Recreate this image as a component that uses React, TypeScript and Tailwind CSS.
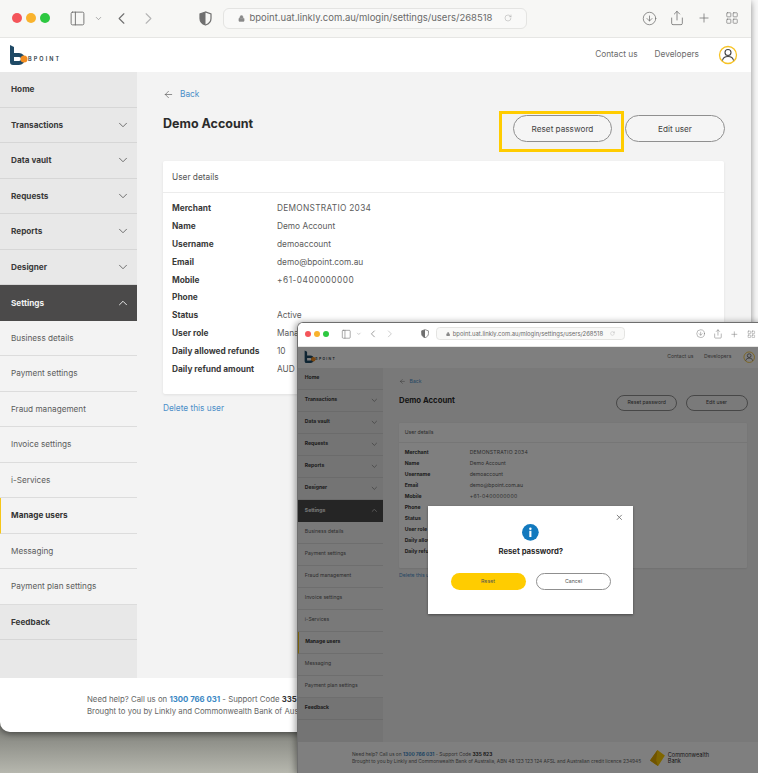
import { ArrowLeft, ChevronDown, ChevronLeft, ChevronRight, ChevronUp, CircleArrowDown, LayoutGrid, Lock, PanelLeft, Plus, RotateCw, Share, X } from "lucide-react";

const font = "[font-family:Inter,'Liberation_Sans',sans-serif]";

const mainNav = [
  { label: "Home" },
  { label: "Transactions", arrow: true },
  { label: "Data vault", arrow: true },
  { label: "Requests", arrow: true },
  { label: "Reports", arrow: true },
  { label: "Designer", arrow: true },
];
const subNav = ["Business details", "Payment settings", "Fraud management", "Invoice settings", "i-Services", "Manage users", "Messaging", "Payment plan settings"];
const details: [string, string][] = [
  ["Merchant", "DEMONSTRATIO 2034"],
  ["Name", "Demo Account"],
  ["Username", "demoaccount"],
  ["Email", "demo@bpoint.com.au"],
  ["Mobile", "+61-0400000000"],
  ["Phone", ""],
  ["Status", "Active"],
  ["User role", "Manager"],
  ["Daily allowed refunds", "10"],
  ["Daily refund amount", "AUD 1,000.00"],
];

function Toolbar({ white }: { white: boolean }) {
  return (
    <div className={`relative z-20 flex h-[38px] shrink-0 items-center border-b border-[#e6e6e4] pb-[1px] pl-[12px] text-[#6f6f6f] ${white ? "bg-white" : "bg-[#f7f7f5]"}`}>
      <div className="flex w-[48px] gap-[4.5px]">
        <span className="h-[9.5px] w-[9.5px] rounded-full bg-[#f4555a]" />
        <span className="h-[9.5px] w-[9.5px] rounded-full bg-[#f9b32d]" />
        <span className="h-[9.5px] w-[9.5px] rounded-full bg-[#2dc840]" />
      </div>
      <PanelLeft size={17} strokeWidth={1.3} className="ml-[9px]" />
      <ChevronDown size={9} strokeWidth={1.5} className="ml-[8px]" />
      <ChevronLeft size={19} strokeWidth={1.4} className="ml-[9px]" />
      <ChevronRight size={19} strokeWidth={1.4} className="ml-[8px] text-[#b5b5b5]" />
      <svg width="13" height="15" viewBox="0 0 13 15" className="ml-[41px]">
        <path d="M6.5 1 1 3v4.5C1 11 3.5 13 6.5 14c3-1 5.500-3 5.500-6.500V3z" fill="none" stroke="#6f6f6f" strokeWidth="1.200" />
        <path d="M6.500 1 1 3v4.500C1 11 3.500 13 6.500 14z" fill="#6f6f6f" />
      </svg>
      <div className={`ml-[11px] flex h-[21px] w-[304px] items-center justify-center gap-[4px] rounded-[6px] border border-[#e4e4e2] bg-[#f9f9f8] text-[9.500px] text-[#6a6a6a] ${font}`}>
        <Lock size={7} fill="#8a8a8a" strokeWidth={1.500} className="text-[#8a8a8a]" />
        <span>bpoint.uat.linkly.com.au/mlogin/settings/users/268518</span>
        <RotateCw size={8} strokeWidth={1.300} className="ml-[7px] text-[#9a9a9a]" />
      </div>
      <CircleArrowDown size={15} strokeWidth={1.200} className="ml-[115px]" />
      <Share size={16} strokeWidth={1.200} className="ml-[12px]" />
      <Plus size={14} strokeWidth={1.300} className="ml-[12px]" />
      <LayoutGrid size={14} strokeWidth={1.100} className="ml-[14px]" />
    </div>
  );
}

function Logo() {
  return (
    <div className="flex items-end">
      <svg width="20" height="22" viewBox="0 0 20 22">
        <path d="M1 1 L5 3 V9 H10 A6 6 0 1 1 10 21 H4 A3 3 0 0 1 1 18 Z M5 13 V17 H10 A2 2 0 1 0 10 13 Z" fill="#1f4a66" fillRule="evenodd" />
        <circle cx="15" cy="15" r="3.500" fill="#f28c1e" />
      </svg>
      <span className={`-ml-[1px] mb-[3.500px] text-[5.500px] font-semibold leading-none tracking-[0.38em] text-[#2b3a45] ${font}`}>BPOINT</span>
    </div>
  );
}

function Header() {
  return (
    <div className={`flex h-[34px] shrink-0 items-center bg-white pb-[1px] pl-[9px] pr-[13px] text-[8.300px] text-[#6b6b6b] ${font}`}>
      <Logo />
      <span className="ml-auto">Contact us</span>
      <span className="ml-[17px]">Developers</span>
      <svg width="20" height="20" viewBox="0 0 20 20" className="ml-[19px]">
        <circle cx="10" cy="10" r="8.500" fill="white" stroke="#f7c325" strokeWidth="1.300" />
        <circle cx="10" cy="7.500" r="3" fill="none" stroke="#444" strokeWidth="1.100" />
        <path d="M4.500 15.500c.5-3 3-4 5.500-4s5 1 5.500 4" fill="none" stroke="#444" strokeWidth="1.100" />
      </svg>
    </div>
  );
}

function Sidebar() {
  return (
    <div className={`flex w-[137px] shrink-0 flex-col bg-[#e8e8e8] text-[8.200px] ${font}`}>
      {mainNav.map((n) => (
        <div key={n.label} className="flex h-[35.500px] shrink-0 items-center justify-between border-b border-[#d6d6d6] pl-[11px] pr-[7px] font-bold text-[#3a3a3a]">
          <span className={n.label === "Home" ? "mb-[1px]" : ""}>{n.label}</span>
          {n.arrow && <ChevronDown size={14} strokeWidth={1.400} className="text-[#555]" />}
        </div>
      ))}
      <div className="flex h-[35.500px] shrink-0 items-center justify-between bg-[#4b4a4a] pl-[11px] pr-[7px] font-bold text-[#f2f2f2]">
        <span>Settings</span>
        <ChevronUp size={14} strokeWidth={1.600} />
      </div>
      {subNav.map((s) => {
        const active = s === "Manage users";
        return (
          <div
            key={s}
            className={`flex h-[35.500px] shrink-0 items-center border-b border-[#dcdcdc] bg-[#f3f3f3] ${active ? "border-l border-l-[#f5c518] pl-[10px] font-bold text-[#333]" : "pl-[11px] text-[#5c5c5c]"}`}
          >
            {s}
          </div>
        );
      })}
      <div className="flex h-[35.500px] shrink-0 items-center border-b border-[#d6d6d6] pl-[11px] font-bold text-[#3a3a3a]">Feedback</div>
    </div>
  );
}

function Main({ highlight }: { highlight: boolean }) {
  return (
    <div className={`min-w-0 flex-1 bg-[#f3f3f3] pl-[26px] pr-[26px] pt-[16px] ${font}`}>
      <div className="flex items-center gap-[6px] text-[8.300px] text-[#4b8ec8]">
        <ArrowLeft size={11} strokeWidth={1.400} className="text-[#555]" />
        <span>Back</span>
      </div>
      <div className="relative mt-[12px] flex h-[49px] items-start justify-between">
        <h1 className="mt-[3px] text-[12.500px] font-bold text-[#2b2b2b]">Demo Account</h1>
        <div className="mt-[3px] flex gap-[13px] text-[8.200px] text-[#444]">
          <div className="relative flex h-[27px] w-[99px] items-center justify-center rounded-full border border-[#8f8f8f] bg-[#f5f5f5]">
            Reset password
            {highlight && <div className="absolute -left-[15px] -right-[13px] -top-[5px] h-[41px] border-[3px] border-[#ffcc00]" />}
          </div>
          <div className="flex h-[27px] w-[100px] items-center justify-center rounded-full border border-[#8f8f8f] bg-[#f5f5f5]">Edit user</div>
        </div>
      </div>
      <div className="h-[233px] w-[561px] rounded-[2px] bg-white shadow-[0_1px_3px_rgba(0,0,0,0.08)]">
        <div className="flex h-[32px] items-center border-b border-[#ececec] pl-[9px] text-[8.300px] text-[#555]">User details</div>
        <div className="grid grid-cols-[105px_1fr] pl-[9px] pt-[7px] text-[8.300px] leading-[17.800px]">
          {details.map(([k, v]) => (
            <div key={k} className="contents">
              <span className="font-bold text-[#3a3a3a]">{k}</span>
              <span className={`text-[#5c5c5c] ${k === "Mobile" ? "tracking-[0.5px]" : k === "Merchant" ? "tracking-[0.3px]" : ""}`}>{v}</span>
            </div>
          ))}
        </div>
      </div>
      <div className="mt-[8px] text-[8.300px] text-[#4b8ec8]">Delete this user</div>
    </div>
  );
}

function Footer() {
  return (
    <div className={`flex h-[54px] shrink-0 items-center bg-white pl-[87px] text-[7.800px] leading-[12px] text-[#666] ${font}`}>
      <div className="whitespace-nowrap">
        <div>
          Need help? Call us on <span className="font-bold text-[#3a87c4]">1300 766 031</span> - Support Code <span className="font-bold text-[#333]">335 823</span>
        </div>
        <div>Brought to you by Linkly and Commonwealth Bank of Australia, ABN 48 123 123 124 AFSL and Australian credit licence 234945</div>
      </div>
      <svg width="24" height="26" viewBox="0 0 24 26" className="ml-[14px]">
        <path d="M12 0 24 9 13 26 0 17z" fill="#ffcc00" />
        <path d="M12 0 10 17 13 26 0 17z" fill="#e0a800" />
      </svg>
      <div className="ml-[5px] text-[9px] leading-[10px] text-[#333]">Commonwealth<br />Bank</div>
    </div>
  );
}

function Modal() {
  return (
    <div className="absolute inset-x-0 bottom-0 top-[38px] z-10 bg-black/50">
      <div className={`absolute left-[210px] top-[257px] flex h-[175px] w-[331px] flex-col items-center bg-white pt-[29px] shadow-[0_1px_4px_rgba(0,0,0,0.4)] ${font}`}>
        <X size={14} strokeWidth={2.500} className="absolute right-[16px] top-[12px] text-[#777]" />
        <svg width="27" height="27" viewBox="0 0 27 27" className="mt-[1px]">
          <circle cx="13.500" cy="13.500" r="13.500" fill="#1279be" />
          <circle cx="13.500" cy="7.500" r="2" fill="white" />
          <rect x="11.800" y="11" width="3.400" height="10" fill="white" />
        </svg>
        <div className="mt-[7px] text-[12.500px] font-bold text-[#2b2b2b]">Reset password?</div>
        <div className="mt-[26px] flex gap-[17px] text-[8.500px] text-[#555]">
          <div className="flex h-[27px] w-[121px] items-center justify-center rounded-full bg-[#ffcc00]">Reset</div>
          <div className="flex h-[27px] w-[121px] items-center justify-center rounded-full border border-[#8f8f8f] bg-white">Cancel</div>
        </div>
      </div>
    </div>
  );
}

function Window({ dialog }: { dialog: boolean }) {
  return (
    <div className="relative flex h-full w-[751px] flex-col overflow-hidden">
      <Toolbar white={dialog} />
      <Header />
      <div className="flex min-h-0 flex-1">
        <Sidebar />
        <Main highlight={!dialog} />
      </div>
      <Footer />
      {dialog && <Modal />}
    </div>
  );
}

export default function App() {
  return (
    <div className="relative h-[773px] w-[758px] overflow-hidden bg-[#f7f7f7]">
      <div className="absolute inset-x-0 bottom-0 h-[60px] bg-gradient-to-b from-[#6f706b] to-[#b6b7ae]" />
      <div className="absolute left-0 top-0 h-[732px] w-[751px] overflow-hidden rounded-b-[10px] shadow-[0_2px_6px_rgba(0,0,0,0.45)]">
        <Window dialog={false} />
      </div>
      <div className="absolute left-[297px] top-[322px] overflow-hidden rounded-tl-[6px] border-l border-t border-[#6e6e6e] shadow-[-2px_0_6px_rgba(0,0,0,0.35)]">
        <div className="h-[729px] w-[751px] [zoom:0.62]">
          <Window dialog={true} />
        </div>
      </div>
    </div>
  );
}
